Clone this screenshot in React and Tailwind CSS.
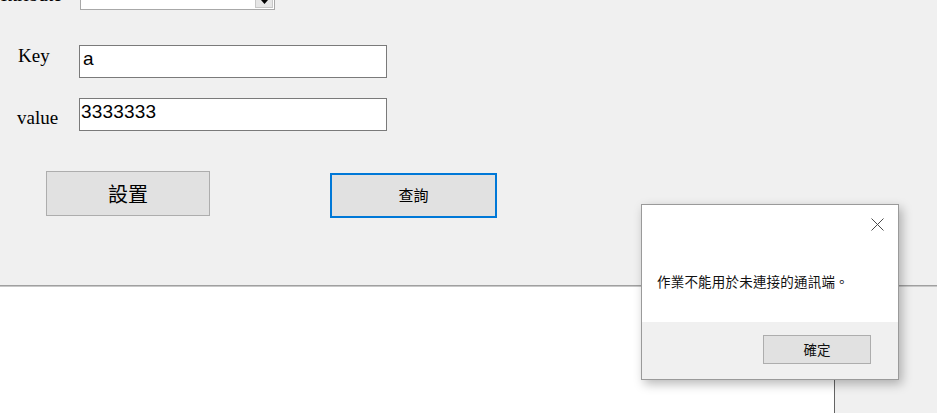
export default function App() {
  const serif = { fontFamily: '"Liberation Serif", "Noto Sans CJK TC", serif' };
  const sans = { fontFamily: '"Liberation Sans", "Noto Sans CJK TC", sans-serif' };
  const cjk = { fontFamily: '"Noto Sans CJK TC", "Liberation Sans", sans-serif' };
  return (
    <div className="relative w-[937px] h-[413px] overflow-hidden bg-[#f0f0f0]">
      {/* top form panel */}
      <div className="h-[285px] bg-[#f0f0f0] flex flex-col overflow-hidden">
        {/* cut-off combobox row */}
        <div className="flex items-end h-[33px] mt-[-23px] shrink-0">
          <div className="w-[80px] text-[19px] leading-none text-black pb-[6px]" style={serif}>
            <span className="relative left-[-7px]">Attribute</span>
          </div>
          <div className="w-[195px] h-[33px] bg-white border border-[#a8a8a8] flex justify-end items-end">
            <div className="w-[18px] h-[13px] mb-[1px] mr-[1px] bg-[#e6e6e6] border border-[#c8c8c8] flex items-center justify-center">
              <svg width="7" height="4" viewBox="0 0 7 4"><path d="M0 0h7L3.5 4z" fill="#000" /></svg>
            </div>
          </div>
        </div>
        {/* Key */}
        <div className="flex items-start mt-[35px] h-[33px] shrink-0">
          <div className="w-[79px] pl-[18px] pt-[1px] text-[19px] leading-none text-black" style={serif}>Key</div>
          <div className="w-[308px] h-[33px] bg-white border border-[#7a7a7a] pl-[3px] pt-[3px] text-[19px] leading-none text-black" style={sans}>a</div>
        </div>
        {/* value */}
        <div className="flex items-start mt-[20px] h-[33px] shrink-0">
          <div className="w-[79px] pl-[17px] pt-[10px] text-[19px] leading-none text-black" style={serif}>value</div>
          <div className="w-[308px] h-[33px] bg-white border border-[#7a7a7a] pl-[1px] pt-[3px] text-[19px] leading-none text-black tracking-[0.2px]" style={sans}>3333333</div>
        </div>
        {/* buttons */}
        <div className="flex items-start mt-[40px] shrink-0">
          <div className="ml-[46px] w-[164px] h-[45px] bg-[#e1e1e1] border border-[#adadad] flex items-center justify-center text-[20px] text-black" style={cjk}>設置</div>
          <div className="ml-[120px] mt-[2px] w-[167px] h-[45px] bg-[#e1e1e1] border-2 border-[#0078d7] flex items-center justify-center text-[15px] text-black" style={cjk}>查詢</div>
        </div>
      </div>
      <div className="h-px bg-[#a0a0a0]" />
      <div className="h-px bg-[#c8c8c8]" />
      {/* bottom area */}
      <div className="flex h-[126px]">
        <div className="w-[835px] h-full bg-white border-r border-[#646464]" />
        <div className="flex-1 h-full bg-[#f0f0f0]" />
      </div>

      {/* message box */}
      <div className="absolute left-[641px] top-[204px] w-[258px] h-[176px] border border-[#9a9a9a] bg-white flex flex-col shadow-[3px_4px_10px_rgba(0,0,0,0.28)]">
        <div className="flex-1 relative bg-white">
          <svg className="absolute left-[229px] top-[13px]" width="13" height="13" viewBox="0 0 13 13">
            <path d="M0.5 0.5L12.5 12.5M12.5 0.5L0.5 12.5" stroke="#4a4a4a" strokeWidth="1" />
          </svg>
          <div className="absolute left-[15px] top-[70px] text-[13.5px] leading-none text-[#111] whitespace-nowrap tracking-[0.2px]" style={cjk}>作業不能用於未連接的通訊端。</div>
        </div>
        <div className="h-[57px] bg-[#f0f0f0] flex items-start justify-end pr-[27px] pt-[13px]">
          <div className="w-[108px] h-[29px] bg-[#e1e1e1] border border-[#adadad] flex items-center justify-center text-[13.5px] text-[#111]" style={cjk}>確定</div>
        </div>
      </div>
    </div>
  );
}
